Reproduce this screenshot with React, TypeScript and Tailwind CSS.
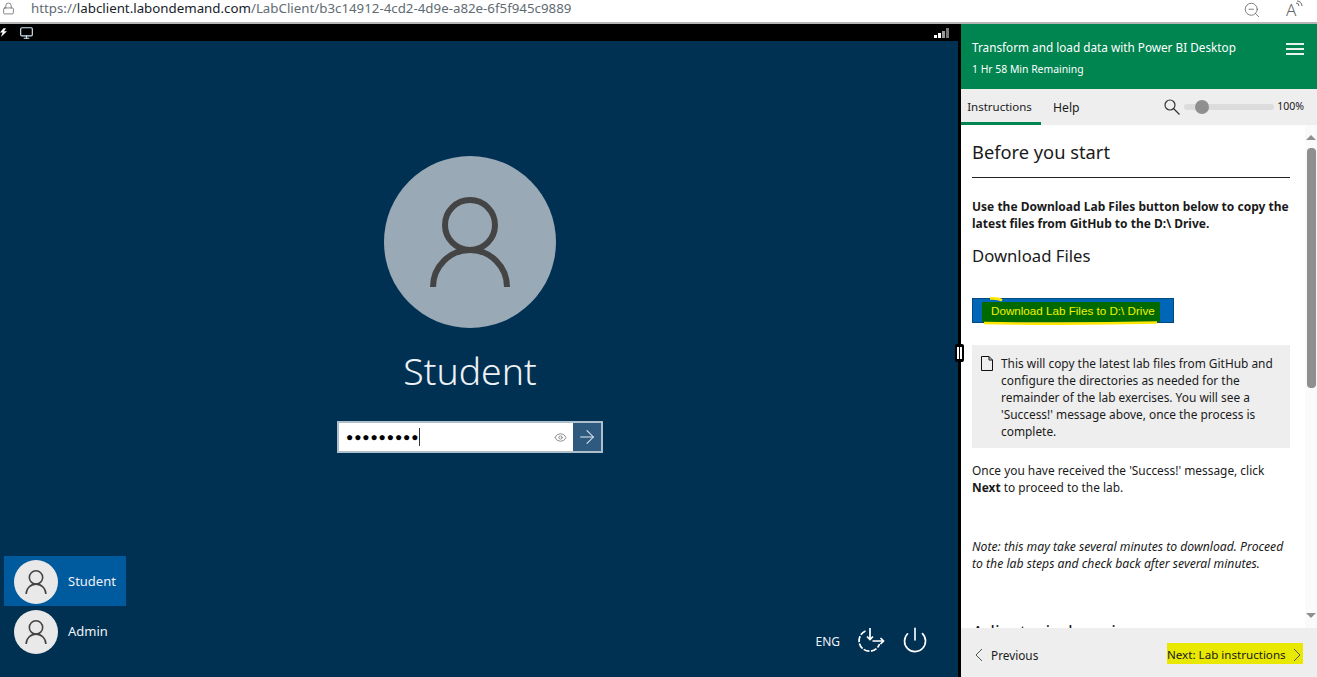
import { ArrowRight, Eye, Lock, Monitor, Power, ZoomOut } from "lucide-react"

const ui = "font-['Noto_Sans','Open_Sans',sans-serif]"

function PersonIcon({ className, stroke = "#444" }: { className?: string; stroke?: string }) {
  return (
    <svg viewBox="0 0 80 90" fill="none" stroke={stroke} strokeWidth="6" className={className}>
      <circle cx="40" cy="28" r="25" />
      <path d="M3 90 A37 37 0 0 1 77 90" />
    </svg>
  )
}

function UserRow({ name, active }: { name: string; active?: boolean }) {
  return (
    <div className={"flex h-[50px] w-[122px] items-center gap-[10px] pl-[10px] pt-[1px] " + (active ? "bg-[#005a9e]" : "")}>
      <div className="flex h-[44px] w-[44px] items-center justify-center rounded-full bg-[#e9e9e9]">
        <PersonIcon className="h-[24px] w-[22px]" />
      </div>
      <span className="pt-[1px] text-[13px] text-[#eef2f6]">{name}</span>
    </div>
  )
}

function BrowserBar() {
  return (
    <div className="flex h-[24px] items-start border-b-2 border-[#b5b5b5] bg-white">
      <Lock className="ml-[2px] mt-[1px] h-[15px] w-[13px] text-[#555]" strokeWidth={1.3} />
      <div className="ml-[16px] text-[13.3px] leading-[16px] text-[#5f6b72]">
        https://<span className="text-[#16222a]">labclient.labondemand.com</span>/LabClient/b3c14912-4cd2-4d9e-a82e-6f5f945c9889
      </div>
      <div className="ml-auto mr-[16px] flex items-center gap-[25px] text-[#666]">
        <ZoomOut className="h-[18px] w-[18px]" strokeWidth={1.1} />
        <span className="relative w-[15px] text-[17px] font-light leading-[20px]">
          A
          <svg viewBox="0 0 8 8" className="absolute left-[9px] top-0 h-[8px] w-[8px]" fill="none" stroke="#666">
            <path d="M1 3 A3 3 0 0 1 4 6 M2 1 A5 5 0 0 1 7 6" />
          </svg>
        </span>
      </div>
    </div>
  )
}

function LockScreen() {
  return (
    <div className="flex w-[961px] shrink-0 flex-col border-r-[3px] border-black bg-[#003153]">
      <div className="flex h-[17px] items-center bg-black pr-[9px]">
        <svg viewBox="0 0 8 10" className="h-[9px] w-[7px]" fill="white">
          <path d="M4 0 L0 5 H3 L1 10 L8 3.5 H4.5 L7 0 Z" />
        </svg>
        <Monitor className="ml-[12px] h-[14px] w-[15px] text-[#cfe6f4]" strokeWidth={2} />
        <div className="ml-auto flex items-end gap-px">
          <span className="h-[3px] w-[3px] bg-white" />
          <span className="h-[5px] w-[3px] bg-white" />
          <span className="h-[7px] w-[3px] bg-[#999]" />
          <span className="h-[10px] w-[3px] bg-[#777]" />
        </div>
      </div>
      <div className="flex flex-1 flex-col">
        <div className="flex flex-col items-center pr-[18px] pt-[115px]">
          <div className="flex h-[172px] w-[172px] items-center justify-center rounded-full bg-[#9aa9b6]">
            <PersonIcon className="h-[90px] w-[80px]" />
          </div>
          <div className="mt-[18px] text-[37.4px] font-light leading-[50px] text-[#eef2f6]">Student</div>
          <div className="mt-[25px] flex h-[32px] w-[266px] border-[2px] border-[#aebecb] bg-[#aebecb]">
            <div className="flex flex-1 items-center bg-white pl-[7px]">
              <span className="text-[12px] tracking-[0.9px] text-black">●●●●●●●●●</span>
              <span className="h-[18px] w-px bg-[#333]" />
              <Eye className="ml-auto mr-[6px] h-[13px] w-[13px] text-[#777]" strokeWidth={1.5} />
            </div>
            <div className="flex w-[28px] items-center justify-center bg-[#2f5a80]">
              <ArrowRight className="h-[22px] w-[22px] text-[#e5ebf0]" strokeWidth={1.1} />
            </div>
          </div>
        </div>
        <div className="mt-auto flex items-end justify-between pb-[21px] pl-[4px] pr-[29px]">
          <div className="flex flex-col">
            <UserRow name="Student" active />
            <UserRow name="Admin" />
          </div>
          <div className="flex items-center pb-[2px] text-white">
            <span className="mr-[16px] mt-[3px] text-[12px] text-[#eef2f6]">ENG</span>
            <svg viewBox="0 0 28 26" className="mr-[16px] h-[26px] w-[29px]" fill="none" stroke="white" strokeWidth="1.7">
              <path d="M9 4 A10.5 10.5 0 1 0 23 17" strokeDasharray="6 1.5" />
              <path d="M13.5 1 V12 M10.5 9.5 L13.5 12.5 L16.5 9.5 M16 14 H27 M24 11 L27 14 L24 17" />
            </svg>
            <Power className="h-[28px] w-[28px]" strokeWidth={1.4} />
          </div>
        </div>
      </div>
    </div>
  )
}

function Sidebar() {
  return (
    <div className="flex min-w-0 flex-1 flex-col bg-white text-[12px] text-[#1a1a1a]">
      <div className="flex h-[65px] shrink-0 items-start justify-between bg-[#008450] pl-[11px] pr-[13px] text-white">
        <div>
          <div className="mt-[14px] text-[11.75px] leading-[18px]">Transform and load data with Power BI Desktop</div>
          <div className="mt-[6px] text-[10.4px] leading-[15px]">1 Hr 58 Min Remaining</div>
        </div>
        <div className="mt-[19px] flex w-[18px] flex-col gap-[3.5px]">
          <span className="h-[1.5px] bg-[#e8f2ee]" />
          <span className="h-[1.5px] bg-[#e8f2ee]" />
          <span className="h-[1.5px] bg-[#e8f2ee]" />
        </div>
      </div>
      <div className="flex h-[36px] shrink-0 bg-[#eeeeee]">
        <div className="flex h-[36px] w-[80px] items-center justify-center border-b-[3px] border-[#008450] pr-[3px] pt-[3px] text-[11.5px]">Instructions</div>
        <div className="ml-[12px] flex h-[36px] items-center pt-[3px] text-[12.2px]">Help</div>
        <div className="ml-auto mr-[13px] flex items-center">
          <svg viewBox="0 0 16 16" className="h-[16px] w-[16px]" fill="none" stroke="#333" strokeWidth="1.2">
            <circle cx="6" cy="6" r="5" />
            <path d="M9.5 9.5 L15.5 15.5" />
          </svg>
          <div className="relative ml-[4px] h-[6px] w-[90px] rounded-full bg-[#dcdcdc]">
            <span className="absolute -top-[4px] left-[11px] h-[14px] w-[14px] rounded-full bg-[#8f8f8f]" />
          </div>
          <span className="ml-[3px] text-[10.5px]">100%</span>
        </div>
      </div>
      <div className="flex min-h-0 flex-1">
        <div className="min-w-0 flex-1 overflow-hidden pl-[11px] pr-[15px]">
          <h2 className="mt-[14px] text-[18.3px] leading-[26px]">Before you start</h2>
          <div className="mt-[12px] h-px bg-[#222]" />
          <p className="mt-[20px] text-[12px] font-bold leading-[17px]">
            Use the Download Lab Files button below to copy the latest files from GitHub to the D:\ Drive.
          </p>
          <h3 className="mt-[12px] text-[16.7px] leading-[24px]">Download Files</h3>
          <div className="relative mt-[30px] h-[25px] w-[202px] border border-[#004a80] bg-[#0067b8] pt-[3px]">
            <div className="ml-[9px] h-[20px] w-[178px] bg-[#006a00] pl-[9px] font-['Liberation_Sans',sans-serif] text-[11.65px] leading-[18px] text-[#f2f200]">
              Download Lab Files to D:\ Drive
            </div>
            {/* highlighter pen strokes over the button */}
            <svg viewBox="0 0 202 29" className="absolute -left-px -top-[2px] h-[29px] w-[202px]" fill="none" stroke="#ffe600" strokeWidth="2.6">
              <path d="M18 1.5 Q26 1 30 3.5" />
              <path d="M12 26 Q100 27.5 185 25.5" />
            </svg>
          </div>
          <div className="mt-[22px] flex h-[103px] gap-[8px] bg-[#eeeeee] pl-[9px] pr-[8px] pt-[10px]">
            <svg viewBox="0 0 12 15" className="mt-px h-[15px] w-[12px] shrink-0" fill="none" stroke="#111" strokeWidth="1">
              <path d="M0.5 0.5 H8 L11.5 4 V14.5 H0.5 Z M8 0.5 V4 H11.5" />
            </svg>
            <p className="text-[11.9px] leading-[17px]">
              This will copy the latest lab files from GitHub and configure the directories as needed for the remainder of the lab exercises. You will see a 'Success!' message above, once the process is complete.
            </p>
          </div>
          <p className="mt-[14px] text-[11.9px] leading-[17px]">
            Once you have received the 'Success!' message, click <b>Next</b> to proceed to the lab.
          </p>
          <p className="mt-[42px] text-[12.2px] italic leading-[17px]">
            Note: this may take several minutes to download. Proceed to the lab steps and check back after several minutes.
          </p>
          <h2 className="mt-[47px] whitespace-nowrap text-[18.3px] leading-[26px]">Adjust window size</h2>
        </div>
        <div className="flex w-[12px] shrink-0 flex-col items-center bg-[#fafafa] pt-[10px]">
          <span className="h-0 w-0 border-x-[5px] border-b-[5px] border-x-transparent border-b-[#8f8f8f]" />
          <span className="mt-[8px] h-[240px] w-[9px] rounded-[4px] bg-[#8f8f8f]" />
          <span className="mb-[10px] mt-auto h-0 w-0 border-x-[5px] border-t-[5px] border-x-transparent border-t-[#8f8f8f]" />
        </div>
      </div>
      <div className="flex h-[49px] shrink-0 items-center justify-between bg-[#eeeeee] pl-[14px] pr-[14px] pt-[5px]">
        <div className="flex items-center gap-[8px] text-[11.8px]">
          <svg viewBox="0 0 8 14" className="h-[14px] w-[8px]" fill="none" stroke="#555">
            <path d="M7 1 L1 7 L7 13" />
          </svg>
          <span className="pt-px">Previous</span>
        </div>
        <div className="mb-[3px] flex h-[21px] w-[136px] items-center bg-[#e8e800] pt-[3px] text-[11.6px]">
          <span>Next: Lab instructions</span>
          <svg viewBox="0 0 8 14" className="ml-[7px] h-[14px] w-[8px]" fill="none" stroke="#555">
            <path d="M1 1 L7 7 L1 13" />
          </svg>
        </div>
      </div>
    </div>
  )
}

export default function App() {
  return (
    <div className={"relative flex h-[677px] w-[1317px] flex-col overflow-hidden " + ui}>
      <BrowserBar />
      <div className="flex min-h-0 flex-1">
        <LockScreen />
        <Sidebar />
      </div>
      {/* splitter handle sits over the panel edge */}
      <div className="absolute left-[955px] top-[344px] flex h-[18px] w-[9px] items-center justify-center gap-px rounded-[2px] bg-black">
        <span className="h-[12px] w-[2px] bg-white" />
        <span className="h-[12px] w-[2px] bg-white" />
      </div>
    </div>
  )
}
